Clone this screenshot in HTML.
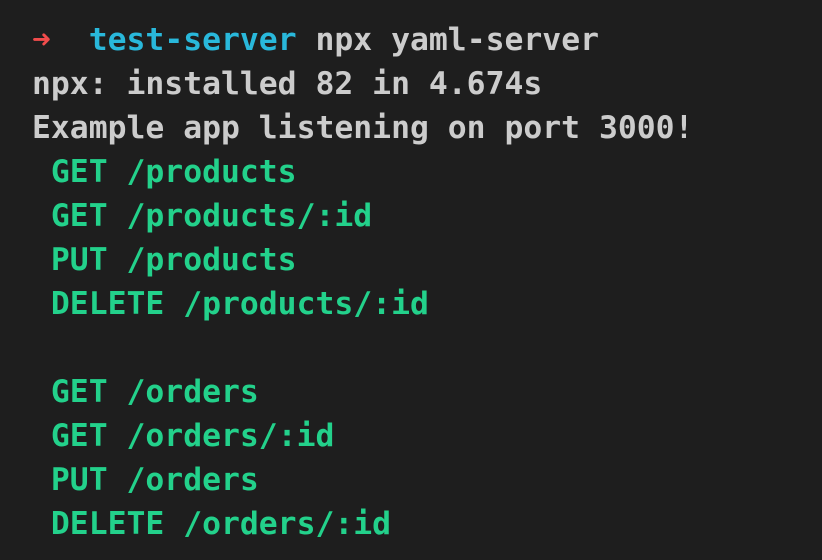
<!DOCTYPE html><html><head><style>
html,body{margin:0;background:#1e1e1e;width:822px;height:560px;overflow:hidden}
pre{margin:0;position:absolute;left:32px;top:18px;font-family:"DejaVu Sans Mono","Liberation Mono",monospace;font-weight:bold;font-size:31.4px;line-height:44px;color:#cccccc;letter-spacing:0}
.r{color:#f14c4c}.c{color:#29b8db}.g{color:#23d18b}
</style></head><body><pre><span class="r">➜</span>  <span class="c">test-server</span> npx yaml-server
npx: installed 82 in 4.674s
Example app listening on port 3000!
<span class="g"> GET /products
 GET /products/:id
 PUT /products
 DELETE /products/:id

 GET /orders
 GET /orders/:id
 PUT /orders
 DELETE /orders/:id</span></pre></body></html>
